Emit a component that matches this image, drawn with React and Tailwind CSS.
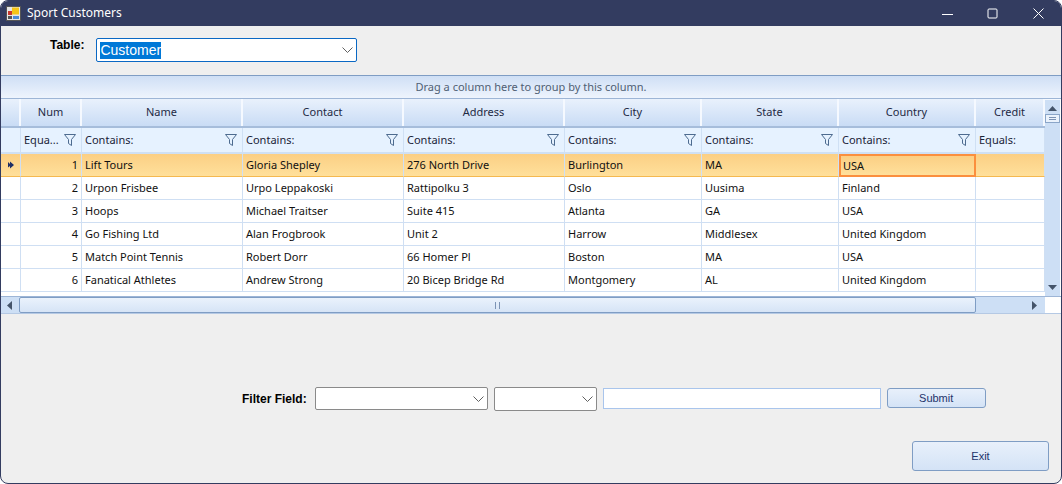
const cols = "grid grid-cols-[20px_61px_161px_161px_161px_137px_137px_137px_69px]";
const font = "font-['Noto_Sans',sans-serif]";
const Chevron = () => (
  <svg width="11" height="6" viewBox="0 0 11 6" fill="none" stroke="#606060" strokeWidth="1"><path d="M0.5 0.5 L5.5 5.5 L10.5 0.5" /></svg>
);
const Funnel = () => (
  <svg width="12" height="12" viewBox="0 0 12 12" fill="none" stroke="#4d6b8f" strokeWidth="1"><path d="M0.5 0.5 H11.5 L7.5 5.5 V11.5 L4.5 9.5 V5.5 Z" /></svg>
);
const headers = ["", "Num", "Name", "Contact", "Address", "City", "State", "Country", "Credit"];
const filters = ["", "Equa...", "Contains:", "Contains:", "Contains:", "Contains:", "Contains:", "Contains:", "Equals:"];
const rows = [
  ["1", "Lift Tours", "Gloria Shepley", "276 North Drive", "Burlington", "MA", "USA"],
  ["2", "Urpon Frisbee", "Urpo Leppakoski", "Rattipolku 3", "Oslo", "Uusima", "Finland"],
  ["3", "Hoops", "Michael Traitser", "Suite 415", "Atlanta", "GA", "USA"],
  ["4", "Go Fishing Ltd", "Alan Frogbrook", "Unit 2", "Harrow", "Middlesex", "United Kingdom"],
  ["5", "Match Point Tennis", "Robert Dorr", "66 Homer Pl", "Boston", "MA", "USA"],
  ["6", "Fanatical Athletes", "Andrew Strong", "20 Bicep Bridge Rd", "Montgomery", "AL", "United Kingdom"],
];
function Select({ w, h, className = "" }) {
  return (
    <div className={`${w} ${h} ${className} flex items-center justify-end pr-[3px] bg-white border border-[#8a8a8a] rounded-[2px]`}>
      <Chevron />
    </div>
  );
}
function Row({ r, i }) {
  const sel = i === 0;
  const bg = sel ? "bg-gradient-to-b from-[#fbcf84] to-[#ffe09b]" : "bg-white";
  const line = sel ? "border-b-[#f5b950]" : "border-b-[#cfdff3]";
  return (
    <div className={`${cols} h-[23px] text-[11px] leading-[21px] text-[#111]`}>
      <div className={`${bg} ${line} border-b border-r border-r-[#cfdff3] flex items-center justify-center`}>
        {sel && <svg width="8" height="8" viewBox="0 0 8 8"><path d="M1 1 L3 3 V0.5 L7 4 L3 7.5 V5 L1 6.5 Z" fill="#1e2f66" /></svg>}
      </div>
      <div className={`${bg} ${line} border-b border-r border-r-[#cfdff3] text-right pr-[3px]`}>{r[0]}</div>
      {r.slice(1).map((t, j) => (
        j === 5 && sel ? (
          <div key={j} className={`${bg} border-2 border-[#fb8f3e] pl-[2px] leading-[19px] -mt-0`}>{t}</div>
        ) : (
          <div key={j} className={`${bg} ${line} border-b border-r border-r-[#cfdff3] pl-[3px] truncate`}>{t}</div>
        )
      ))}
      <div className={`${bg} ${line} border-b border-r border-r-[#cfdff3]`} />
    </div>
  );
}
export default function App() {
  return (
    <div className={`w-[1062px] h-[484px] relative overflow-hidden bg-white ${font}`}>
      <div className="w-full h-full flex flex-col bg-[#efefef] border border-[#333c60] rounded-[8px] overflow-hidden">
        <div className="h-[26px] -mx-px -mt-px shrink-0 bg-[#333c60] flex items-center text-white text-[12px] pl-[6px]">
          <svg width="15" height="15" viewBox="0 0 15 15" className="shrink-0">
            <rect x="0.5" y="0.5" width="14" height="14" fill="#e6e6e6" stroke="#555" />
            <rect x="2" y="5" width="4" height="4" fill="#c8392e" />
            <rect x="2" y="10" width="4" height="3" fill="#555" />
            <rect x="6" y="1.5" width="7" height="7" fill="#f5c518" />
            <rect x="7" y="10" width="6" height="3" fill="#4a8bd8" />
          </svg>
          <span className="ml-[6px]">Sport Customers</span>
          <div className="ml-auto flex items-center">
            <svg width="11" height="11" viewBox="0 0 11 11" className="mr-[34px]"><path d="M0 6.5 H11" stroke="#fff" /></svg>
            <svg width="11" height="11" viewBox="0 0 11 11" className="mr-[35px]"><rect x="1" y="1" width="9" height="9" rx="1" fill="none" stroke="#fff" /></svg>
            <svg width="11" height="11" viewBox="0 0 11 11" className="mr-[18px]"><path d="M0.5 0.5 L10.5 10.5 M10.5 0.5 L0.5 10.5" stroke="#fff" /></svg>
          </div>
        </div>

        <div className="h-[49px] shrink-0 flex items-start font-['Liberation_Sans',sans-serif]">
          <span className="ml-[49px] mt-[12px] text-[12px] leading-[14px] font-bold text-black">Table:</span>
          <div className="ml-[12px] mt-[12px] w-[261px] h-[24px] bg-white border border-[#0a68c4] rounded-[2px] flex items-center pl-[3px] pr-[3px]">
            <span className="bg-[#0078d7] text-white text-[14px] leading-[17px]">Customer</span>
            <span className="ml-auto"><Chevron /></span>
          </div>
        </div>

        <div className="h-[239px] shrink-0 flex flex-col bg-white border-t border-[#7f9dc4]">
          <div className="h-[23px] shrink-0 bg-gradient-to-b from-[#cfdff5] to-[#eef4fd] border-b border-[#9db5d6] flex items-center justify-center text-[11px] text-[#506074]">
            Drag a column here to group by this column.
          </div>
          <div className="flex-1 flex min-h-0">
            <div className="w-[1044px] shrink-0 flex flex-col min-w-0 overflow-hidden">
              <div className={`${cols} h-[29px] shrink-0 border-b-2 border-[#a6bddb] text-[11px] text-[#1f2a44]`}>
                {headers.map((h, i) => (
                  <div key={i} className="bg-gradient-to-b from-[#e9f1fc] to-[#c9dcf5] border-r-2 border-[#f5f9ff] flex items-center justify-center">{h}</div>
                ))}
              </div>
              <div className={`${cols} h-[26px] shrink-0 bg-[#e6f2ff] border-b-2 border-[#cfe0f4] text-[11px] text-[#1a2438]`}>
                {filters.map((f, i) => (
                  <div key={i} className="border-r border-[#cfe0f4] flex items-center justify-between pl-[3px] pr-[5px]">
                    <span>{f}</span>
                    {f && f !== "Equals:" && <Funnel />}
                  </div>
                ))}
              </div>
              {rows.map((r, i) => <Row key={i} r={r} i={i} />)}
              <div className="flex-1 bg-white" />
            </div>
            <div className="w-[15px] shrink-0 bg-[#cddff5] flex flex-col items-center pt-[6px] border-t border-[#f5f9ff]">
              <svg width="9" height="5" viewBox="0 0 9 5"><path d="M4.5 0 L9 5 H0 Z" fill="#44546a" /></svg>
              <div className="mt-[3px] w-[15px] h-[9px] bg-[#eaf2fc] border border-[#8aa5c8] flex flex-col items-center justify-center gap-px">
                <div className="w-[7px] h-px bg-[#7c93b5]" />
                <div className="w-[7px] h-px bg-[#7c93b5]" />
              </div>
              <svg width="9" height="5" viewBox="0 0 9 5" className="mt-auto mb-[6px]"><path d="M0 0 H9 L4.5 5 Z" fill="#44546a" /></svg>
            </div>
          </div>
          <div className="h-[18px] shrink-0 flex border-t border-[#9db5d6] border-b border-b-[#b5c9e4]">
            <div className="w-[1044px] shrink-0 bg-[#cddff5] flex items-center">
              <svg width="5" height="9" viewBox="0 0 5 9" className="ml-[6px]"><path d="M5 0 V9 L0 4.5 Z" fill="#44546a" /></svg>
              <div className="ml-[7px] w-[957px] h-[16px] bg-gradient-to-b from-[#eaf2fc] to-[#d6e4f6] border border-[#7f9dc4] rounded-[2px] flex items-center justify-center">
                <div className="w-[5px] h-[7px] border-x border-[#7c93b5]" />
              </div>
              <svg width="5" height="9" viewBox="0 0 5 9" className="ml-auto mr-[8px]"><path d="M0 0 V9 L5 4.5 Z" fill="#44546a" /></svg>
            </div>
            <div className="flex-1 bg-white" />
          </div>
        </div>

        <div className="h-[73px] shrink-0 flex items-start pt-[73px] font-['Liberation_Sans',sans-serif]">
          <span className="ml-[241px] mt-[5px] text-[12px] leading-[14px] font-bold text-black">Filter Field:</span>
          <Select w="w-[173px]" h="h-[23px]" className="ml-[8px]" />
          <Select w="w-[103px]" h="h-[24px]" className="ml-[6px]" />
          <div className="ml-[6px] w-[278px] h-[21px] bg-white border border-[#a9c5ec] mt-[1px]" />
          <div className="ml-[6px] w-[99px] h-[20px] mt-[1px] bg-gradient-to-b from-[#e8f0fb] to-[#d4e3f6] border border-[#7f9dc4] rounded-[3px] flex items-center justify-center text-[11px] text-[#23336b]">Submit</div>
        </div>
        <div className="flex-1 relative">
          <div className="absolute left-[911px] top-[54px] w-[137px] h-[30px] bg-gradient-to-b from-[#e8f0fb] to-[#d4e3f6] border border-[#7f9dc4] rounded-[3px] flex items-center justify-center text-[11px] text-[#23336b] font-['Liberation_Sans',sans-serif]">Exit</div>
        </div>
      </div>
    </div>
  );
}
